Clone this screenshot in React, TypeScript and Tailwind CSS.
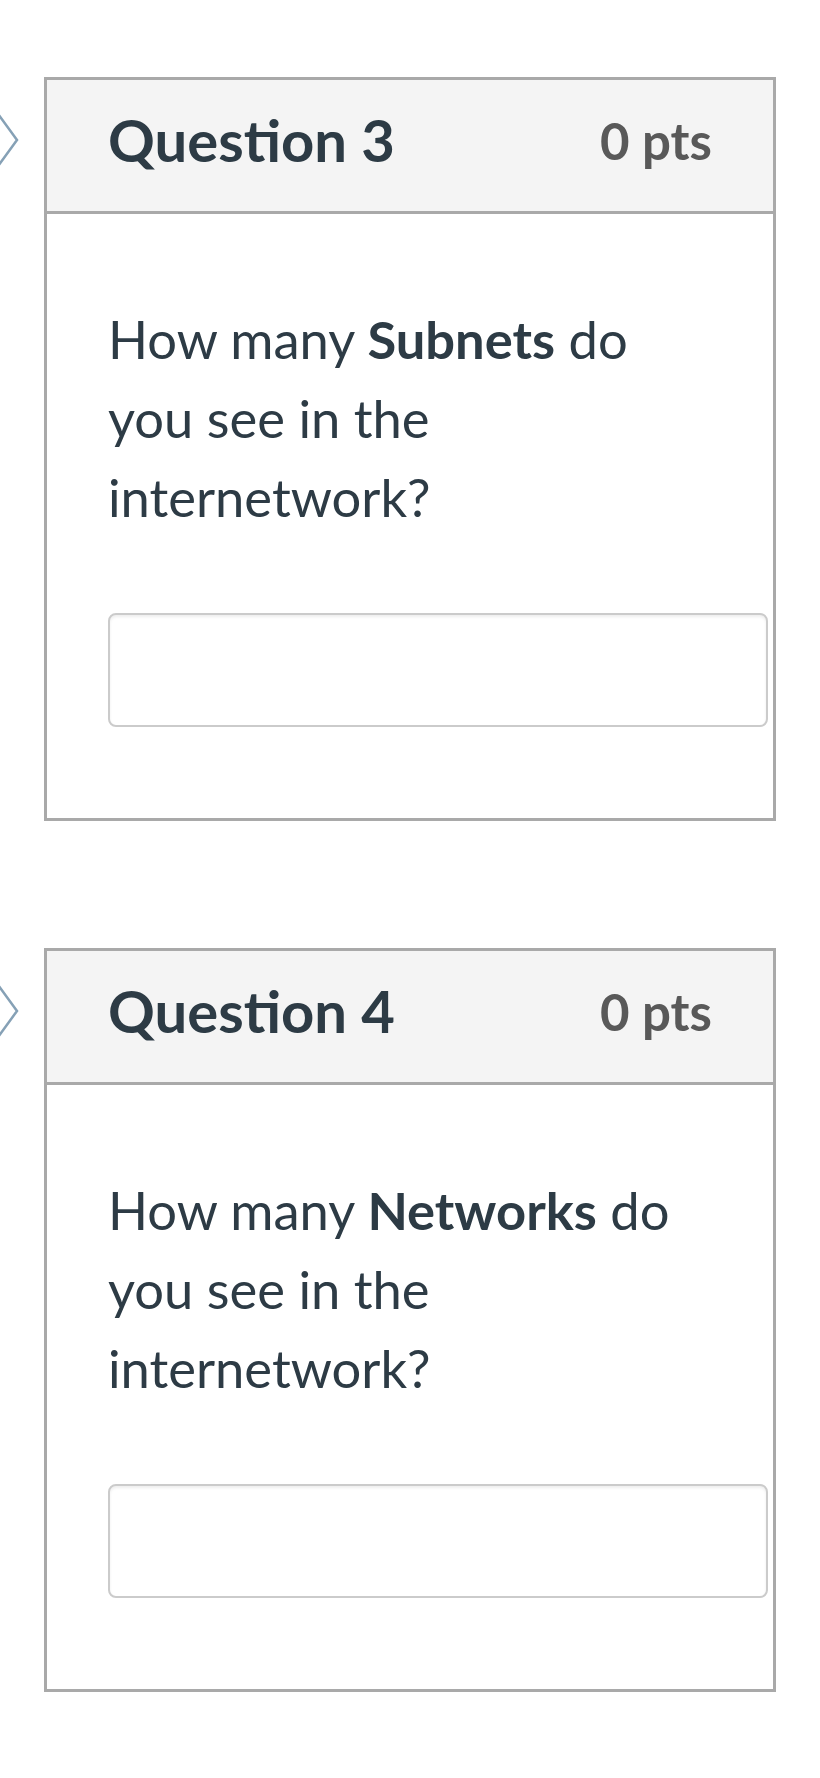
import React from "react";

interface Question {
  num: number;
  before: string;
  bold: string;
  after: string;
}

const questions: Question[] = [
  { num: 3, before: "How many ", bold: "Subnets", after: " do you see in the internetwork?" },
  { num: 4, before: "How many ", bold: "Networks", after: " do you see in the internetwork?" },
];

function Chevron() {
  return (
    <svg width="20" height="54" viewBox="0 0 20 54" className="mt-[36px] block">
      <polyline points="-2,1 17,27 -2,53" fill="none" stroke="#86a1b6" strokeWidth="2.5" strokeLinejoin="miter" />
    </svg>
  );
}

function QuestionCard({ q }: { q: Question }) {
  return (
    <div className="flex items-start">
      <div className="w-[44px] shrink-0">
        <Chevron />
      </div>
      <div className="w-[732px] border-[3px] border-[#a9a9a9] bg-white">
        <div className="flex items-center justify-between h-[134px] bg-[#f4f4f4] border-b-[3px] border-[#a9a9a9] pl-[61px] pr-[61px] pb-[12px]">
          <span className="text-[58px] font-bold text-[#2d3b45] leading-none">Question {q.num}</span>
          <span className="text-[51px] font-bold text-[#595959] leading-none pt-[2px]">0 pts</span>
        </div>
        <div className="pt-[85px] pb-[91px] pl-[61px]">
          <p className="w-[590px] text-[52.5px] leading-[79px] text-[#2d3b45]">
            {q.before}
            <strong className="font-bold">{q.bold}</strong>
            {q.after}
          </p>
          <div className="mt-[77px] w-[660px] h-[114px] rounded-[8px] border-[2.5px] border-[#cbcbcb] bg-white shadow-[inset_0_2px_3px_rgba(0,0,0,0.07)]"></div>
        </div>
      </div>
    </div>
  );
}

export default function App() {
  return (
    <div className="min-h-[1778px] bg-white pt-[77px] font-['Lato','Noto_Sans',sans-serif]">
      <div className="flex flex-col gap-[127px]">
        {questions.map((q) => (
          <QuestionCard key={q.num} q={q} />
        ))}
      </div>
    </div>
  );
}
